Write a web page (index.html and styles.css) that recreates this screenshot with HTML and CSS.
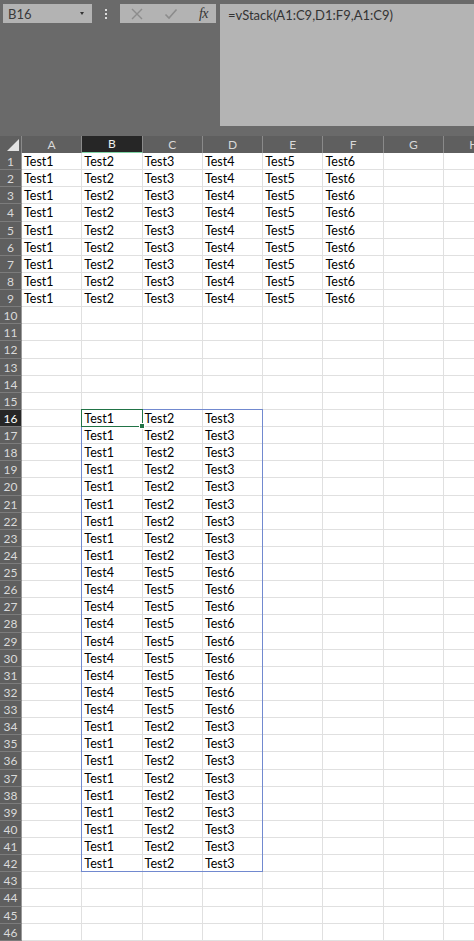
FILE: index.html
```html
<!DOCTYPE html>
<html>
<head>
<meta charset="utf-8">
<link rel="stylesheet" href="styles.css">
</head>
<body>
<div class="top">
  <div class="namebox"><span class="ref">B16</span><span class="caret"></span></div>
  <div class="dots"><i></i><i></i><i></i></div>
  <div class="fxbox">
    <svg class="ico" width="14" height="14" viewBox="0 0 14 14"><path d="M2 2 L12 12 M12 2 L2 12" stroke="#8c8c8c" stroke-width="1.4" fill="none"/></svg>
    <svg class="ico" width="14" height="14" viewBox="0 0 14 14"><path d="M1.5 7.5 L5 11 L12.5 2.5" stroke="#8c8c8c" stroke-width="1.6" fill="none"/></svg>
    <span class="fx">fx</span>
  </div>
  <div class="formula">=vStack(A1:C9,D1:F9,A1:C9)</div>
</div>
<div class="sheet">
  <div class="corner"></div><div class="ch">A</div><div class="ch active">B</div><div class="ch">C</div><div class="ch">D</div><div class="ch">E</div><div class="ch">F</div><div class="ch">G</div><div class="ch">H</div>
  <div class="rh">1</div><div>Test1</div><div>Test2</div><div>Test3</div><div>Test4</div><div>Test5</div><div>Test6</div><div></div><div></div>
  <div class="rh">2</div><div>Test1</div><div>Test2</div><div>Test3</div><div>Test4</div><div>Test5</div><div>Test6</div><div></div><div></div>
  <div class="rh">3</div><div>Test1</div><div>Test2</div><div>Test3</div><div>Test4</div><div>Test5</div><div>Test6</div><div></div><div></div>
  <div class="rh">4</div><div>Test1</div><div>Test2</div><div>Test3</div><div>Test4</div><div>Test5</div><div>Test6</div><div></div><div></div>
  <div class="rh">5</div><div>Test1</div><div>Test2</div><div>Test3</div><div>Test4</div><div>Test5</div><div>Test6</div><div></div><div></div>
  <div class="rh">6</div><div>Test1</div><div>Test2</div><div>Test3</div><div>Test4</div><div>Test5</div><div>Test6</div><div></div><div></div>
  <div class="rh">7</div><div>Test1</div><div>Test2</div><div>Test3</div><div>Test4</div><div>Test5</div><div>Test6</div><div></div><div></div>
  <div class="rh">8</div><div>Test1</div><div>Test2</div><div>Test3</div><div>Test4</div><div>Test5</div><div>Test6</div><div></div><div></div>
  <div class="rh">9</div><div>Test1</div><div>Test2</div><div>Test3</div><div>Test4</div><div>Test5</div><div>Test6</div><div></div><div></div>
  <div class="rh">10</div><div></div><div></div><div></div><div></div><div></div><div></div><div></div><div></div>
  <div class="rh">11</div><div></div><div></div><div></div><div></div><div></div><div></div><div></div><div></div>
  <div class="rh">12</div><div></div><div></div><div></div><div></div><div></div><div></div><div></div><div></div>
  <div class="rh">13</div><div></div><div></div><div></div><div></div><div></div><div></div><div></div><div></div>
  <div class="rh">14</div><div></div><div></div><div></div><div></div><div></div><div></div><div></div><div></div>
  <div class="rh">15</div><div></div><div></div><div></div><div></div><div></div><div></div><div></div><div></div>
  <div class="rh active">16</div><div></div><div>Test1</div><div>Test2</div><div>Test3</div><div></div><div></div><div></div><div></div>
  <div class="rh">17</div><div></div><div>Test1</div><div>Test2</div><div>Test3</div><div></div><div></div><div></div><div></div>
  <div class="rh">18</div><div></div><div>Test1</div><div>Test2</div><div>Test3</div><div></div><div></div><div></div><div></div>
  <div class="rh">19</div><div></div><div>Test1</div><div>Test2</div><div>Test3</div><div></div><div></div><div></div><div></div>
  <div class="rh">20</div><div></div><div>Test1</div><div>Test2</div><div>Test3</div><div></div><div></div><div></div><div></div>
  <div class="rh">21</div><div></div><div>Test1</div><div>Test2</div><div>Test3</div><div></div><div></div><div></div><div></div>
  <div class="rh">22</div><div></div><div>Test1</div><div>Test2</div><div>Test3</div><div></div><div></div><div></div><div></div>
  <div class="rh">23</div><div></div><div>Test1</div><div>Test2</div><div>Test3</div><div></div><div></div><div></div><div></div>
  <div class="rh">24</div><div></div><div>Test1</div><div>Test2</div><div>Test3</div><div></div><div></div><div></div><div></div>
  <div class="rh">25</div><div></div><div>Test4</div><div>Test5</div><div>Test6</div><div></div><div></div><div></div><div></div>
  <div class="rh">26</div><div></div><div>Test4</div><div>Test5</div><div>Test6</div><div></div><div></div><div></div><div></div>
  <div class="rh">27</div><div></div><div>Test4</div><div>Test5</div><div>Test6</div><div></div><div></div><div></div><div></div>
  <div class="rh">28</div><div></div><div>Test4</div><div>Test5</div><div>Test6</div><div></div><div></div><div></div><div></div>
  <div class="rh">29</div><div></div><div>Test4</div><div>Test5</div><div>Test6</div><div></div><div></div><div></div><div></div>
  <div class="rh">30</div><div></div><div>Test4</div><div>Test5</div><div>Test6</div><div></div><div></div><div></div><div></div>
  <div class="rh">31</div><div></div><div>Test4</div><div>Test5</div><div>Test6</div><div></div><div></div><div></div><div></div>
  <div class="rh">32</div><div></div><div>Test4</div><div>Test5</div><div>Test6</div><div></div><div></div><div></div><div></div>
  <div class="rh">33</div><div></div><div>Test4</div><div>Test5</div><div>Test6</div><div></div><div></div><div></div><div></div>
  <div class="rh">34</div><div></div><div>Test1</div><div>Test2</div><div>Test3</div><div></div><div></div><div></div><div></div>
  <div class="rh">35</div><div></div><div>Test1</div><div>Test2</div><div>Test3</div><div></div><div></div><div></div><div></div>
  <div class="rh">36</div><div></div><div>Test1</div><div>Test2</div><div>Test3</div><div></div><div></div><div></div><div></div>
  <div class="rh">37</div><div></div><div>Test1</div><div>Test2</div><div>Test3</div><div></div><div></div><div></div><div></div>
  <div class="rh">38</div><div></div><div>Test1</div><div>Test2</div><div>Test3</div><div></div><div></div><div></div><div></div>
  <div class="rh">39</div><div></div><div>Test1</div><div>Test2</div><div>Test3</div><div></div><div></div><div></div><div></div>
  <div class="rh">40</div><div></div><div>Test1</div><div>Test2</div><div>Test3</div><div></div><div></div><div></div><div></div>
  <div class="rh">41</div><div></div><div>Test1</div><div>Test2</div><div>Test3</div><div></div><div></div><div></div><div></div>
  <div class="rh">42</div><div></div><div>Test1</div><div>Test2</div><div>Test3</div><div></div><div></div><div></div><div></div>
  <div class="rh">43</div><div></div><div></div><div></div><div></div><div></div><div></div><div></div><div></div>
  <div class="rh">44</div><div></div><div></div><div></div><div></div><div></div><div></div><div></div><div></div>
  <div class="rh">45</div><div></div><div></div><div></div><div></div><div></div><div></div><div></div><div></div>
  <div class="rh">46</div><div></div><div></div><div></div><div></div><div></div><div></div><div></div><div></div>
  <div class="spill"></div>
  <div class="sel"><span class="handle"></span></div>
</div>
</body>
</html>
```

FILE: styles.css
```css
html, body {
  margin: 0;
  padding: 0;
}
body {
  width: 474px;
  height: 941px;
  overflow: hidden;
  background: #6a6a6a;
  font-family: Lato, "Liberation Sans", sans-serif;
}
.top {
  height: 136px;
  box-sizing: border-box;
  padding: 4px 0 0 3px;
  display: flex;
  align-items: flex-start;
}
.namebox {
  width: 89px;
  height: 19px;
  background: #b3b3b3;
  display: flex;
  align-items: center;
  justify-content: space-between;
  box-sizing: border-box;
  padding: 0 8px 0 5px;
}
.ref {
  font-size: 13px;
  color: #3a3a3a;
}
.caret {
  width: 0;
  height: 0;
  border-left: 2.5px solid transparent;
  border-right: 2.5px solid transparent;
  border-top: 3px solid #333;
}
.dots {
  width: 28px;
  height: 19px;
  display: flex;
  flex-direction: column;
  align-items: center;
  justify-content: center;
  gap: 2px;
}
.dots i {
  width: 2px;
  height: 2px;
  background: #dcdcdc;
  display: block;
}
.fxbox {
  width: 96px;
  height: 19px;
  background: #b3b3b3;
  display: flex;
  align-items: center;
  box-sizing: border-box;
  padding: 0 8px 0 10px;
  justify-content: space-between;
}
.fx {
  font-family: "Liberation Serif", serif;
  font-style: italic;
  font-size: 14px;
  color: #333;
  letter-spacing: -0.5px;
}
.formula {
  margin-left: 4px;
  flex: 1;
  height: 122px;
  background: #b4b4b4;
  box-sizing: border-box;
  padding: 3px 8px;
  font-size: 13px;
  color: #333;
}
.sheet {
  position: relative;
  display: grid;
  grid-template-columns: 22px repeat(8, 60.3px);
  grid-template-rows: 17px;
  grid-auto-rows: 17.14px;
  background: #fff;
}
.sheet > div {
  box-sizing: border-box;
  border-right: 1px solid #e0e0e0;
  border-bottom: 1px solid #e0e0e0;
  font-size: 12.5px;
  color: #000;
  padding-left: 2px;
  line-height: 17px;
  white-space: nowrap;
  overflow: hidden;
}
.sheet > .corner {
  background: #5f5f5f;
  border-right: 1px solid #8a8a8a;
  border-bottom: none;
  position: relative;
}
.corner::after {
  content: "";
  position: absolute;
  right: 2px;
  bottom: 2px;
  width: 12px;
  height: 12px;
  background: #e2e2e2;
  clip-path: polygon(100% 0, 100% 100%, 0 100%);
}
.sheet > .ch {
  background: #5f5f5f;
  color: #d8d8d8;
  text-align: center;
  padding: 0;
  font-size: 12px;
  border-right: 1px solid #8a8a8a;
  border-bottom: none;
}
.sheet > .ch.active {
  background: #262626;
  color: #f0f0f0;
  border-bottom: 1px solid #7fd3a5;
  line-height: 16px;
}
.sheet > .rh {
  background: #5f5f5f;
  color: #dadada;
  text-align: center;
  padding: 0;
  font-size: 12px;
  border-right: 1px solid #9a9a9a;
  border-bottom: 1px solid #7c7c7c;
}
.sheet > .rh.active {
  background: #262626;
  color: #fff;
}
.sheet > .spill {
  position: absolute;
  grid-row: 17 / 44;
  grid-column: 3 / 6;
  top: -1px;
  left: -1px;
  right: 0;
  bottom: 0;
  border: 1px solid #7189cf;
  pointer-events: none;
}
.sheet > .sel {
  position: absolute;
  grid-row: 17 / 18;
  grid-column: 3 / 4;
  top: -1px;
  left: -1px;
  right: 0;
  bottom: 0;
  border: 1px solid #217346;
  overflow: visible;
}
.handle {
  position: absolute;
  right: -3px;
  bottom: -3px;
  width: 4px;
  height: 4px;
  background: #217346;
  border: 1px solid #fff;
}
```
